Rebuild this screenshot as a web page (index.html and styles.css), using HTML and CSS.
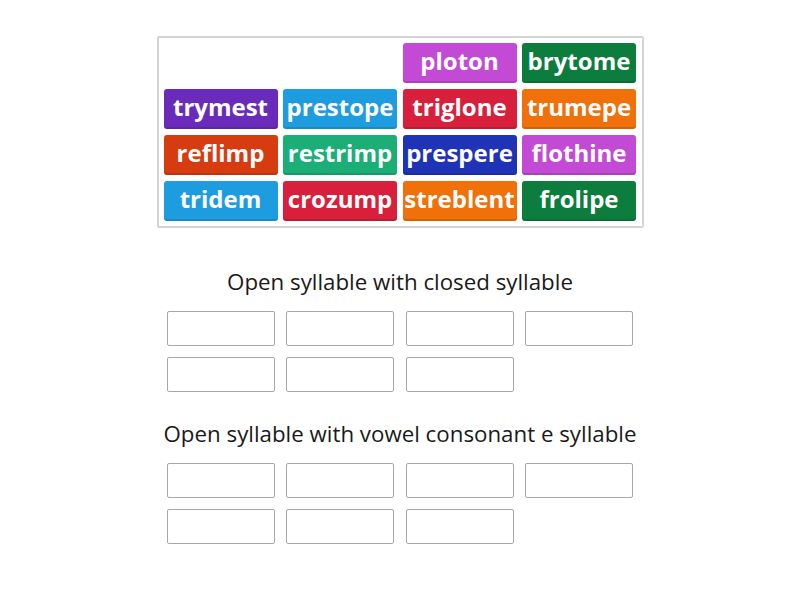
FILE: index.html
```html
<!DOCTYPE html>
<html>
  <head>
    <meta charset="utf-8">
    <title>Group sort</title>
    <link rel="stylesheet" href="styles.css">
  </head>
  <body>
    <div class="page">
      <ul class="bank">
        <li class="tile magenta c3">ploton</li>
        <li class="tile dgreen">brytome</li>
        <li class="tile purple">trymest</li>
        <li class="tile blue">prestope</li>
        <li class="tile red">triglone</li>
        <li class="tile orange">trumepe</li>
        <li class="tile rust">reflimp</li>
        <li class="tile green">restrimp</li>
        <li class="tile navy">prespere</li>
        <li class="tile magenta">flothine</li>
        <li class="tile blue">tridem</li>
        <li class="tile red">crozump</li>
        <li class="tile orange">streblent</li>
        <li class="tile dgreen">frolipe</li>
      </ul>

      <div class="group">
        <h2>Open syllable with closed syllable</h2>
        <div class="slots">
          <span class="slot"></span><span class="slot"></span><span class="slot"></span><span class="slot"></span>
          <span class="slot"></span><span class="slot"></span><span class="slot"></span>
        </div>
      </div>

      <div class="group">
        <h2>Open syllable with vowel consonant e syllable</h2>
        <div class="slots">
          <span class="slot"></span><span class="slot"></span><span class="slot"></span><span class="slot"></span>
          <span class="slot"></span><span class="slot"></span><span class="slot"></span>
        </div>
      </div>
    </div>
  </body>
</html>
```

FILE: styles.css
```css
body {
  margin:0;
  background:#fff;
  font-family:"Open Sans", sans-serif;
}
.page {
  display:flex;
  flex-direction:column;
  align-items:center;
  padding-top:36px;
}
.bank {
  list-style:none;
  margin:0;
  padding:5px;
  width:473px;
  border:2px solid #d4d4d4;
  border-radius:2px;
  display:grid;
  grid-template-columns:repeat(4, 114px);
  grid-auto-rows:40px;
  column-gap:5.5px;
  row-gap:6px;
}
.tile {
  color:#fff;
  font-weight:bold;
  font-size:24px;
  line-height:36px;
  padding-bottom:4px;
  text-align:center;
  white-space:nowrap;
  border-radius:3px;
  box-shadow:inset 0 -2px 0 rgba(0,0,0,0.12);
}
.c3 { grid-column:3; }
.purple { background-color:#6a2bbb; }
.blue { background-color:#1d9ce0; }
.red { background-color:#d81f3b; }
.orange { background-color:#f0700a; }
.rust { background-color:#d73c10; }
.green { background-color:#1cae77; }
.navy { background-color:#1e33b6; }
.magenta { background-color:#c24ad5; }
.dgreen { background-color:#0c7d3c; }

.group {
  display:flex;
  flex-direction:column;
  align-items:center;
}
.group h2 {
  margin:0;
  font-size:22.3px;
  font-weight:normal;
  color:#1a1a1a;
  line-height:28px;
}
.bank + .group { margin-top:40px; }
.group + .group { margin-top:28px; }
.slots {
  margin-top:15px;
  display:grid;
  grid-template-columns:repeat(4, 108px);
  grid-auto-rows:35px;
  column-gap:11.33px;
  row-gap:11px;
}
.slot {
  border:1px solid #a8a8a8;
  border-radius:2px;
}
```
